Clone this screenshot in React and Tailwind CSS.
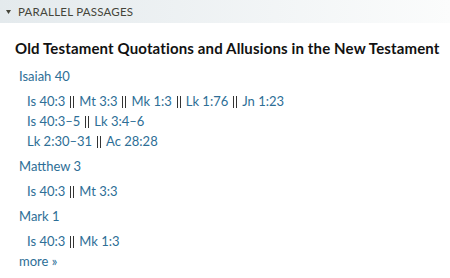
export default function App() {
  const groups = [
    {
      title: 'Isaiah 40',
      lines: [
        ['Is 40:3', 'Mt 3:3', 'Mk 1:3', 'Lk 1:76', 'Jn 1:23'],
        ['Is 40:3–5', 'Lk 3:4–6'],
        ['Lk 2:30–31', 'Ac 28:28'],
      ],
    },
    { title: 'Matthew 3', lines: [['Is 40:3', 'Mt 3:3']] },
    { title: 'Mark 1', lines: [['Is 40:3', 'Mk 1:3']] },
  ];

  return (
    <div className="w-[450px] h-[278px] bg-white overflow-hidden" style={{ fontFamily: 'Lato, "Open Sans", sans-serif' }}>
      <div className="h-[23px] flex items-center pl-[6px] bg-gradient-to-r from-[#e4eaed] to-[#fbfcfc]">
        <svg width="5" height="4" viewBox="0 0 5 4" className="mr-[7px] mt-[1px]">
          <path d="M0 0H5L2.5 4Z" fill="#45453a" />
        </svg>
        <span className="text-[11.5px] tracking-[0.02em] text-[#45453a] uppercase">Parallel Passages</span>
      </div>

      <div className="px-[15px] pt-[14px]">
        <h2 className="text-[15px] tracking-[0.14px] whitespace-nowrap font-bold text-[#111] leading-[22px]">
          Old Testament Quotations and Allusions in the New Testament
        </h2>

        <div className="pl-[4px] mt-[5px] text-[13px] text-[#2d6e96]">
          {groups.map((g) => (
            <div key={g.title}>
              <div className="leading-[20px] py-[2px]">
                <a href="#" className="hover:underline">{g.title}</a>
              </div>
              <div className="pl-[8px] pt-[3px] pb-[3px]">
                {g.lines.map((line, i) => (
                  <div key={i} className="leading-[20px]">
                    {line.map((ref, j) => (
                      <span key={ref}>
                        {j > 0 && (
                          <span className="inline-block w-[4px] h-[12px] mx-[5px] border-x border-[#333] align-[-2px]" />
                        )}
                        <a href="#" className="hover:underline">{ref}</a>
                      </span>
                    ))}
                  </div>
                ))}
              </div>
            </div>
          ))}
          <div className="leading-[20px] -mt-[3px]">
            <a href="#" className="hover:underline">more »</a>
          </div>
        </div>
      </div>
    </div>
  );
}
